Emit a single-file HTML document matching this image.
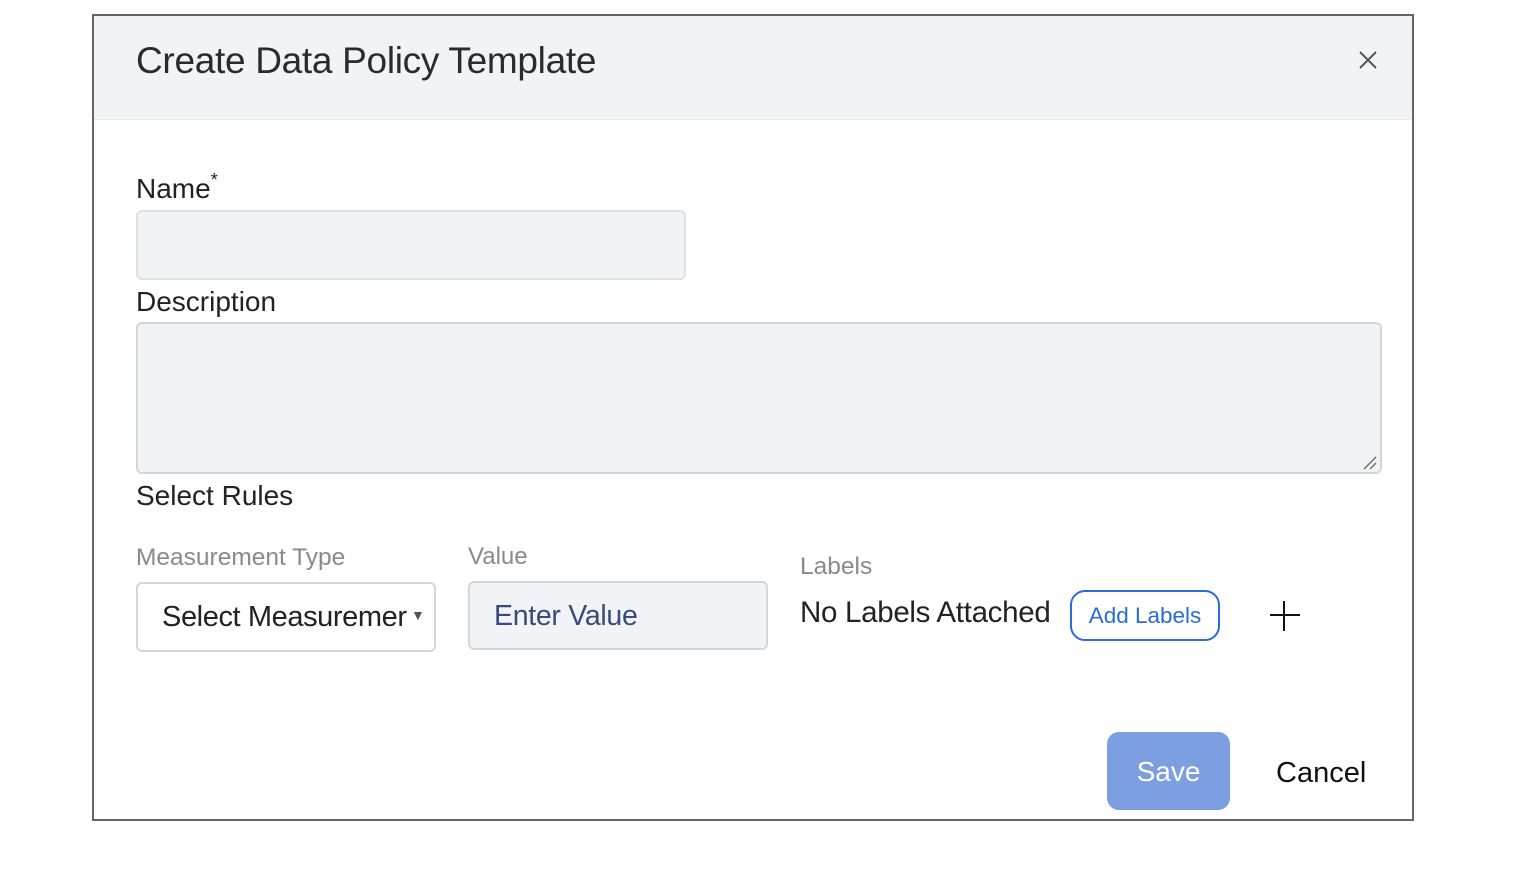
<!DOCTYPE html>
<html><head><style>
body{margin:0;width:1520px;height:882px;background:#fff;font-family:"Liberation Sans",sans-serif;position:relative;overflow:hidden}
.a{position:absolute;white-space:nowrap}
.modal{position:absolute;left:92px;top:14px;width:1318px;height:803px;border:2px solid #666;background:#fff}
.hdr{position:absolute;left:0;top:0;width:1318px;height:103px;background:#f2f3f7;border-bottom:1px solid #e6e8ec}
.lbl{font-size:28px;color:#222;line-height:30px}
.sm{font-size:24.5px;color:#8a8a8a;line-height:26px}
.box{position:absolute;box-sizing:border-box;border-radius:6px}
</style></head><body>
<div class="modal"><div class="hdr"></div></div>
<div class="a" style="left:136px;top:40px;font-size:37px;color:#2b2b2b;line-height:42px;letter-spacing:-0.3px">Create Data Policy Template</div>
<svg class="a" style="left:1358px;top:50px" width="20" height="20" viewBox="0 0 20 20"><path d="M2 2L18 18M18 2L2 18" stroke="#555" stroke-width="2"/></svg>
<div class="a lbl" style="left:136px;top:174px">Name<span style="font-size:18px;position:relative;top:-12px">*</span></div>
<div class="box" style="left:136px;top:210px;width:550px;height:70px;background:#f2f3f7;border:2px solid #dfe1e6"></div>
<div class="a lbl" style="left:136px;top:287px">Description</div>
<div class="box" style="left:136px;top:322px;width:1246px;height:152px;background:#f2f3f7;border:2px solid #d4d6db"></div>
<svg class="a" style="left:1362px;top:455px" width="16" height="16"><path d="M2 14L14 2M8 14L14 8" stroke="#666" stroke-width="1.3"/></svg>
<div class="a lbl" style="left:136px;top:481px">Select Rules</div>
<div class="a sm" style="left:136px;top:545px">Measurement Type</div>
<div class="a sm" style="left:468px;top:544px;font-size:24px">Value</div>
<div class="a sm" style="left:800px;top:554px">Labels</div>
<div class="box" style="left:136px;top:582px;width:300px;height:70px;background:#fff;border:2px solid #d4d6db"></div>
<div class="a" style="left:162px;top:601px;font-size:29px;color:#222;line-height:32px;letter-spacing:-0.4px">Select Measuremer</div>
<div class="a" style="left:411px;top:607px;font-size:14px;color:#555">▼</div>
<div class="box" style="left:468px;top:581px;width:300px;height:69px;background:#f2f3f7;border:2px solid #d4d6db"></div>
<div class="a" style="left:494px;top:600px;font-size:28.5px;color:#3b4a78;line-height:32px;letter-spacing:-0.3px">Enter Value</div>
<div class="a" style="left:800px;top:597px;font-size:29.5px;color:#222;line-height:32px;letter-spacing:-0.3px">No Labels Attached</div>
<div class="box" style="left:1070px;top:590px;width:150px;height:51px;border:2px solid #2b6cd4;border-radius:15px;color:#2b6cd4;font-size:22.5px;text-align:center;line-height:47px">Add Labels</div>
<svg class="a" style="left:1269px;top:600px" width="32" height="32"><path d="M15 1V31M1 15H31" stroke="#111" stroke-width="2"/></svg>
<div class="box" style="left:1107px;top:732px;width:123px;height:78px;background:#7b9fe0;border-radius:12px;color:#fff;font-size:28px;text-align:center;line-height:80px">Save</div>
<div class="a" style="left:1276px;top:756px;font-size:29px;color:#111;line-height:34px">Cancel</div>
</body></html>
